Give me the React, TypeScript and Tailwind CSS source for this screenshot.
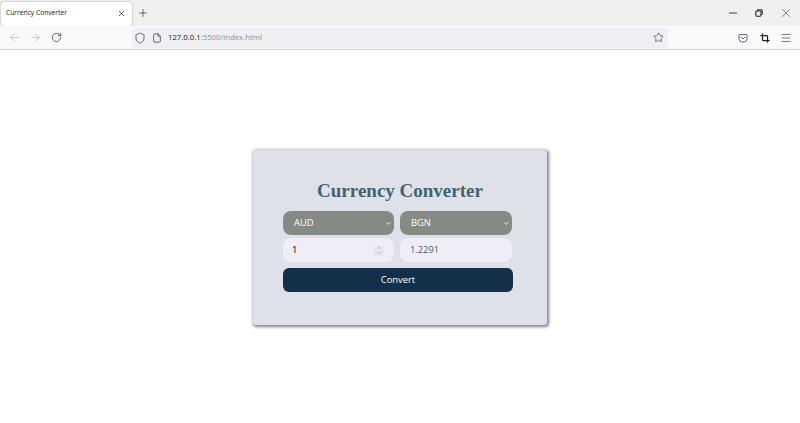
import { ArrowLeft, ArrowRight, RotateCw, Shield, File, Star, X, Plus, Minus, ChevronDown, ChevronUp, Crop, Menu } from "lucide-react";

const ui = "font-['Open_Sans','Noto_Sans',sans-serif]";

function PocketIcon() {
  return (
    <svg width="10" height="10" viewBox="0 0 16 16" fill="none" stroke="#5b5b66" strokeWidth="1.5">
      <path d="M2.5 2.5h11a1 1 0 0 1 1 1V8a6.5 6.5 0 0 1-13 0V3.5a1 1 0 0 1 1-1z" />
      <path d="M5 6.5l3 3 3-3" strokeLinecap="round" strokeLinejoin="round" />
    </svg>
  );
}

function RestoreIcon() {
  return (
    <svg width="8" height="8" viewBox="0 0 10 10" fill="none" stroke="#222" strokeWidth="1.3">
      <rect x="1" y="2.5" width="6.5" height="6.5" rx="1.2" />
      <path d="M3 2.5V2a1 1 0 0 1 1-1h4a1 1 0 0 1 1 1v4a1 1 0 0 1-1 1h-.5" />
    </svg>
  );
}

function Picker({ label, width }: { label: string; width: string }) {
  return (
    <div className={`${width} h-6 rounded-lg bg-[#868a85] flex items-center justify-between pl-[11px] pr-[2.5px] text-white text-[9.4px]`}>
      <span>{label}</span>
      <ChevronDown size={7} strokeWidth={3} />
    </div>
  );
}

export default function App() {
  return (
    <div className={`w-[800px] h-[423px] bg-white flex flex-col overflow-hidden ${ui}`}>
      {/* Tab strip */}
      <div className="h-[26px] bg-[#f0f0f0] flex items-center">
        <div className="w-[131px] h-6 ml-px mt-px bg-white rounded shadow-[0_0_2px_rgba(0,0,0,0.35)] flex items-center justify-between pl-[5px] pr-[6px] text-[6.7px] text-[#15141a]">
          <span>Currency Converter</span>
          <X size={9} strokeWidth={1.8} />
        </div>
        <Plus size={12} className="ml-[5px] text-[#333]" strokeWidth={1.4} />
        <div className="ml-auto flex items-center gap-[16px] pr-[7px]">
          <Minus size={12} className="text-[#222]" strokeWidth={1.8} />
          <RestoreIcon />
          <X size={14} className="text-[#333]" strokeWidth={1} />
        </div>
      </div>

      {/* Toolbar */}
      <div className="h-[23px] bg-[#f9f9fb] border-b border-[#d0d0d4] flex items-center box-content">
        <div className="flex items-center gap-[8px] pl-[8px] w-[132px]">
          <ArrowLeft size={13} className="text-[#bcbcc2]" strokeWidth={1.5} />
          <ArrowRight size={13} className="text-[#bcbcc2]" strokeWidth={1.5} />
          <RotateCw size={11} className="text-[#4a4a52] ml-px" strokeWidth={1.8} />
        </div>
        <div className="w-[536px] h-[20px] bg-[#f0f0f4] rounded flex items-center pl-[2px] pr-[3px]">
          <Shield size={12} className="text-[#4a4a52]" strokeWidth={1.6} />
          <File size={10} className="text-[#4a4a52] ml-[6px]" strokeWidth={2} />
          <span className="ml-[6px] text-[7.75px] text-[#15141a]">
            127.0.0.1<span className="text-[#8f8f96]">:5500/index.html</span>
          </span>
          <Star size={11} className="ml-auto mr-px text-[#4a4a52]" strokeWidth={1.6} />
        </div>
        <div className="flex items-center ml-auto pr-[8px]">
          <PocketIcon />
          <Crop size={10} className="ml-[12px] text-[#222]" strokeWidth={3} />
          <Menu size={12} className="ml-[10px] text-[#5b5b66]" strokeWidth={1.6} />
        </div>
      </div>

      {/* Page */}
      <div className="flex-1 pt-[100px] pl-[253px]">
        <div className="w-[294px] h-[175px] bg-[#dee1e8] rounded-[3px] shadow-[1px_1px_3px_1px_rgba(60,65,90,0.65)] px-[30px] pt-[29px] flex flex-col">
          <h1 className="font-['Liberation_Serif',serif] font-bold text-[19px] leading-[24px] text-[#44616f] text-center">
            Currency Converter
          </h1>
          <div className="mt-[8px] flex gap-[6px]">
            <Picker label="AUD" width="w-[111px]" />
            <Picker label="BGN" width="w-[112px]" />
          </div>
          <div className="mt-[3px] flex gap-[6px] text-[9.3px]">
            <div className="w-[111px] h-6 rounded-lg bg-[#edeef8] flex items-center justify-between pl-[9px] pr-[10px] text-black font-medium">
              <span>1</span>
              <span className="w-[10px] h-[11px] bg-[#e6e7ef] flex flex-col items-center justify-center text-[#777]">
                <ChevronUp size={6} strokeWidth={2} />
                <ChevronDown size={6} strokeWidth={2} />
              </span>
            </div>
            <div className="w-[112px] h-6 rounded-lg bg-[#edeef8] flex items-center pl-[10px] text-[#555a66]">1.2291</div>
          </div>
          <button className="mt-[6px] w-[230px] h-6 rounded-md bg-[#132f4a] text-white text-[9.4px] flex items-center justify-center">
            Convert
          </button>
        </div>
      </div>
    </div>
  );
}
